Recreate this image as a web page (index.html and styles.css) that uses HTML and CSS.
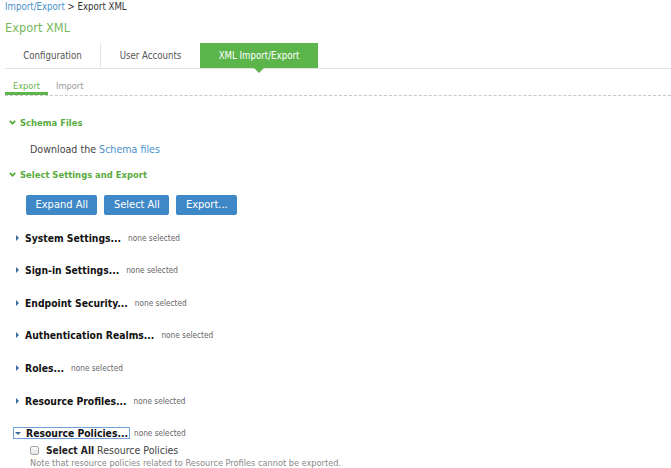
FILE: index.html
```html
<!DOCTYPE html>
<html>
<head>
<meta charset="utf-8">
<link rel="stylesheet" href="styles.css">
</head>
<body>
<div class="crumbs"><a class="link">Import/Export</a> &gt; Export XML</div>
<h1 class="title">Export XML</h1>
<nav class="tabs">
  <div class="tab tab-config">Configuration</div>
  <div class="tab tab-users">User Accounts</div>
  <div class="tab tab-xml active">XML Import/Export<span class="tab-arrow"></span></div>
</nav>
<div class="subtabs">
  <span class="sub active">Export</span>
  <span class="sub">Import</span>
</div>

<div class="section-head"><svg class="chev" width="7" height="5" viewBox="0 0 7 5"><polyline points="0.8,0.8 3.5,3.6 6.2,0.8" fill="none" stroke="#5aab3e" stroke-width="1.8"/></svg>Schema Files</div>
<div class="download">Download the <a class="link">Schema files</a></div>

<div class="section-head head2"><svg class="chev" width="7" height="5" viewBox="0 0 7 5"><polyline points="0.8,0.8 3.5,3.6 6.2,0.8" fill="none" stroke="#5aab3e" stroke-width="1.8"/></svg>Select Settings and Export</div>
<div class="buttons">
  <button class="btn">Expand All</button>
  <button class="btn">Select All</button>
  <button class="btn">Export...</button>
</div>

<ul class="items">
  <li class="item"><span class="caret"></span><b class="name">System Settings...</b><span class="none">none selected</span></li>
  <li class="item"><span class="caret"></span><b class="name">Sign-in Settings...</b><span class="none">none selected</span></li>
  <li class="item"><span class="caret"></span><b class="name">Endpoint Security...</b><span class="none">none selected</span></li>
  <li class="item"><span class="caret"></span><b class="name">Authentication Realms...</b><span class="none">none selected</span></li>
  <li class="item"><span class="caret"></span><b class="name">Roles...</b><span class="none">none selected</span></li>
  <li class="item"><span class="caret"></span><b class="name">Resource Profiles...</b><span class="none">none selected</span></li>
  <li class="item open"><span class="focus"><span class="caret-down"></span><b class="name">Resource Policies...</b></span><span class="none none-open">none selected</span></li>
</ul>
<div class="selectall"><span class="check"></span><b class="sa-bold">Select All</b> Resource Policies</div>
<div class="note">Note that resource policies related to Resource Profiles cannot be exported.</div>
</body>
</html>
```
FILE: styles.css
```css
html, body { margin: 0; padding: 0; background: #fff; }
body { font-family: "DejaVu Sans Condensed", "DejaVu Sans", Verdana, sans-serif; color: #333; overflow: hidden; }
.link { color: #4a8fc9; text-decoration: none; }

.crumbs { font-size: 9.6px; line-height: 14px; padding-left: 5px; color: #333; }
.title { margin: 6px 0 0; padding-left: 5px; font-size: 12.7px; line-height: 16px; font-weight: normal; color: #79b85c; }

.tabs { display: flex; margin: 7px 0 0 5px; height: 25px; border-bottom: 1px solid #e2e2e2; }
.tab { position: relative; font-size: 9.6px; color: #555; display: flex; align-items: center; justify-content: center; }
.tab-config { width: 95px; border-right: 1px solid #e6e6e6; }
.tab-users { width: 99px; }
.tab-xml { width: 118px; }
.tab.active { background: #5cb54b; color: #fff; }
.tab-arrow { position: absolute; left: 50%; bottom: -5px; margin-left: -5px; width: 0; height: 0; border-left: 5px solid transparent; border-right: 5px solid transparent; border-top: 5px solid #5cb54b; }

.subtabs { display: flex; margin: 10px 0 0 5px; border-bottom: 1px dashed #c8c8c8; }
.sub { font-size: 9.2px; line-height: 13px; color: #999; padding: 0 8px; border-bottom: 3px solid transparent; }
.sub.active { color: #6cb551; border-bottom-color: #5cb54b; }

.section-head { display: flex; align-items: center; margin-top: 20px; padding-left: 9px; font-size: 9.4px; line-height: 13px; font-weight: bold; color: #5aab3e; }
.section-head .chev { margin-right: 4px; }
.head2 { margin-top: 12px; }
.download { margin-top: 14px; padding-left: 30px; font-size: 10.6px; line-height: 13px; color: #444; }

.buttons { display: flex; gap: 7px; margin-top: 14px; padding-left: 26px; }
.btn { font-family: inherit; font-size: 11px; height: 20px; line-height: 20px; padding: 0 9.5px; border: 0; border-radius: 2px; background: #3f88c8; color: #fff; margin: 0; }

.items { list-style: none; margin: 16px 0 0; padding: 0 0 0 16px; }
.item { display: flex; align-items: center; height: 13px; margin-bottom: 19.67px; }
.caret { width: 0; height: 0; border-top: 3px solid transparent; border-bottom: 3px solid transparent; border-left: 3px solid #3b6c9c; margin-right: 6px; }
.name { font-size: 10.3px; color: #111; }
.none { font-size: 8.2px; color: #666; margin-left: 7px; }
.open { margin-left: -3px; margin-bottom: 0; }
.focus { display: flex; align-items: center; border: 1px solid #6fa0d6; padding: 0 1px 0 1px; height: 10px; }
.caret-down { width: 0; height: 0; border-left: 3px solid transparent; border-right: 3px solid transparent; border-top: 3px solid #3b6c9c; margin-right: 5px; }
.none-open { margin-left: 4px; }

.selectall { display: flex; align-items: center; margin-top: 4px; padding-left: 30px; height: 13px; font-size: 10.5px; color: #444; white-space: pre; }
.check { width: 7px; height: 7px; border: 1px solid #a8a8a8; border-radius: 2px; background: linear-gradient(#fafafa, #e4e4e4); margin-right: 7px; }
.sa-bold { font-size: 10.1px; color: #222; }
.note { padding-left: 30px; font-size: 9.15px; line-height: 13px; color: #888; }
```
